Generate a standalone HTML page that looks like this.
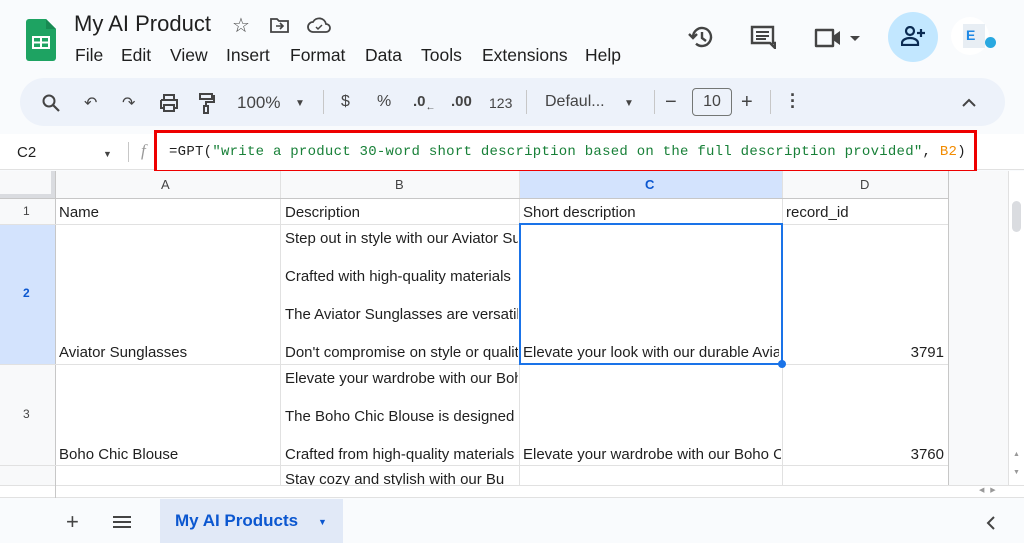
<!DOCTYPE html><html><head><style>
*{margin:0;padding:0;box-sizing:border-box}
body{width:1024px;height:543px;overflow:hidden;background:#f9fbfd;font-family:"Liberation Sans",Arial,sans-serif;position:relative;color:#1f1f1f}
.a{position:absolute}
.m{position:absolute;top:45px;font-size:17.5px}
.cell{position:absolute;font-size:15px;white-space:nowrap;overflow:hidden}
.vl{position:absolute;width:1px;background:#e1e1e1}
.hl{position:absolute;height:1px;background:#e1e1e1}
.tb{position:absolute;top:93px;font-size:16px;color:#444}
</style></head><body>
<svg class="a" style="left:26px;top:19px" width="30" height="42" viewBox="0 0 30 42"><path d="M3 0H20L30 10V39a3 3 0 0 1-3 3H3a3 3 0 0 1-3-3V3a3 3 0 0 1 3-3z" fill="#1ea362"/><path d="M20 0V10H30z" fill="#178a52"/><rect x="6" y="17" width="18" height="13" fill="#fff"/><rect x="8" y="19" width="6" height="3.5" fill="#1ea362"/><rect x="16" y="19" width="6" height="3.5" fill="#1ea362"/><rect x="8" y="24.5" width="6" height="3.5" fill="#1ea362"/><rect x="16" y="24.5" width="6" height="3.5" fill="#1ea362"/></svg>
<div class="a" style="left:74px;top:11px;font-size:22px">My AI Product</div>
<div class="a" style="left:232px;top:13px;font-size:20px;color:#444">☆</div>
<svg class="a" style="left:270px;top:17px" width="20" height="16"><path d="M1 2h6l2 2h9v11H1z" fill="none" stroke="#444" stroke-width="1.8"/><path d="M6 9h7M10 6l3 3-3 3" fill="none" stroke="#444" stroke-width="1.6"/></svg>
<svg class="a" style="left:307px;top:16px" width="24" height="18"><path d="M6 16a5 5 0 0 1 0-10 7 7 0 0 1 13 2 4 4 0 0 1 0 8z" fill="none" stroke="#444" stroke-width="1.8"/><path d="M9 11l2 2 4-4" fill="none" stroke="#444" stroke-width="1.5"/></svg>
<div class="m" style="left:75px">File</div><div class="m" style="left:121px">Edit</div><div class="m" style="left:170px">View</div><div class="m" style="left:226px">Insert</div><div class="m" style="left:290px">Format</div><div class="m" style="left:365px">Data</div><div class="m" style="left:421px">Tools</div><div class="m" style="left:482px">Extensions</div><div class="m" style="left:585px">Help</div>
<svg class="a" style="left:688px;top:24px" width="28" height="26"><path d="M5 13a9 9 0 1 1 3 6.7" fill="none" stroke="#444" stroke-width="2.4"/><path d="M1 10l4 4 4-4" fill="none" stroke="#444" stroke-width="2.4"/><path d="M14 8v6l4 3" fill="none" stroke="#444" stroke-width="2.4"/></svg>
<svg class="a" style="left:750px;top:25px" width="26" height="24"><path d="M2 2h21v16h2v5l-5-5H2z" fill="none" stroke="#444" stroke-width="2.4"/><path d="M6 7h13M6 11h13M6 14h10" stroke="#444" stroke-width="2"/></svg>
<svg class="a" style="left:814px;top:27px" width="50" height="22"><path d="M2 3h17v16H2z" fill="none" stroke="#444" stroke-width="2.4" stroke-linejoin="round"/><path d="M19 9l7-5v14l-7-5z" fill="#444"/><path d="M36 9h10l-5 5z" fill="#444"/></svg>
<div class="a" style="left:888px;top:12px;width:50px;height:50px;border-radius:50%;background:#c2e7ff"></div>
<svg class="a" style="left:901px;top:26px" width="26" height="20"><circle cx="9" cy="5" r="4" fill="none" stroke="#0b2b52" stroke-width="2.2"/><path d="M1 19v-2c0-3 4-5 8-5s8 2 8 5v2z" fill="none" stroke="#0b2b52" stroke-width="2.2"/><path d="M20 3v8M16 7h8" stroke="#0b2b52" stroke-width="2.2"/></svg>
<div class="a" style="left:951px;top:17px;width:38px;height:38px;border-radius:50%;background:#fff"></div>
<div class="a" style="left:963px;top:24px;width:22px;height:24px;background:#e8eef4"></div>
<div class="a" style="left:966px;top:27px;font-size:14px;color:#1e88e5;font-weight:bold">E</div>
<div class="a" style="left:985px;top:37px;width:11px;height:11px;border-radius:50%;background:#29a8e0"></div>
<div class="a" style="left:20px;top:78px;width:985px;height:48px;border-radius:24px;background:#edf2fa"></div>
<svg class="a" style="left:41px;top:93px" width="20" height="20"><circle cx="8" cy="8" r="5.5" fill="none" stroke="#444" stroke-width="2"/><path d="M12 12l6 6" stroke="#444" stroke-width="2.2"/></svg>
<div class="tb" style="left:84px">↶</div><div class="tb" style="left:122px">↷</div>
<svg class="a" style="left:159px;top:94px" width="20" height="18"><path d="M5 5V1h10v4M2 6h16v8h-3M5 14H2V6" fill="none" stroke="#444" stroke-width="2"/><rect x="5" y="11" width="10" height="6" fill="none" stroke="#444" stroke-width="2"/></svg>
<svg class="a" style="left:198px;top:92px" width="18" height="22"><path d="M2 2h12v5H2zM14 4h2v6H8v4" fill="none" stroke="#444" stroke-width="2"/><rect x="6" y="14" width="4" height="7" fill="none" stroke="#444" stroke-width="2"/></svg>
<div class="tb" style="left:237px;font-size:17px">100%</div><div class="tb" style="left:295px;font-size:10px;top:98px">▼</div>
<div class="a" style="left:323px;top:90px;width:1px;height:24px;background:#c7c7c7"></div>
<div class="tb" style="left:341px">$</div><div class="tb" style="left:377px">%</div>
<div class="tb" style="left:413px;font-weight:bold;font-size:15px">.0<sub style="font-size:10px">←</sub></div>
<div class="tb" style="left:451px;font-weight:bold;font-size:15px">.00</div>
<div class="tb" style="left:489px;font-size:14px;top:95px">123</div>
<div class="a" style="left:526px;top:90px;width:1px;height:24px;background:#c7c7c7"></div>
<div class="tb" style="left:545px">Defaul...</div><div class="tb" style="left:624px;font-size:10px;top:98px">▼</div>
<div class="a" style="left:654px;top:90px;width:1px;height:24px;background:#c7c7c7"></div>
<div class="tb" style="left:665px;font-size:20px;top:91px">−</div>
<div class="a" style="left:692px;top:88px;width:40px;height:28px;border:1px solid #747775;border-radius:4px;font-size:16px;text-align:center;line-height:26px;color:#444">10</div>
<div class="tb" style="left:741px;font-size:20px;top:91px">+</div>
<div class="a" style="left:770px;top:90px;width:1px;height:24px;background:#c7c7c7"></div>
<div class="tb" style="left:790px;font-weight:bold;font-size:18px;top:92px;line-height:6px">·<br>·<br>·</div>
<svg class="a" style="left:962px;top:98px" width="14" height="9"><path d="M1 8l6-6 6 6" fill="none" stroke="#444" stroke-width="2"/></svg>
<div class="a" style="left:0;top:134px;width:1024px;height:36px;background:#fff;border-bottom:1px solid #e1e1e1"></div>
<div class="a" style="left:17px;top:144px;font-size:15px">C2</div>
<div class="a" style="left:103px;top:149px;font-size:9px;color:#444">▼</div>
<div class="a" style="left:128px;top:142px;width:1px;height:20px;background:#c7c7c7"></div>
<div class="a" style="left:141px;top:141px;font-size:17px;font-style:italic;color:#999;font-family:'Liberation Serif',serif">f</div>
<div class="a" style="left:154px;top:130px;width:823px;height:43px;border:3px solid #ee0000;background:#fff"></div>
<div class="a" style="left:169px;top:144px;font-size:14px;font-family:'Liberation Mono',monospace;letter-spacing:0.26px;white-space:nowrap">=GPT(<span style="color:#188038">"write a product 30-word short description based on the full description provided"</span>, <span style="color:#f28b00">B2</span>)</div>
<div class="a" style="left:0;top:171px;width:1008px;height:314px;background:#fff"></div>
<div class="a" style="left:0;top:171px;width:1008px;height:27px;background:#f8f9fa"></div>
<div class="a" style="left:0;top:171px;width:55px;height:314px;background:#f8f9fa"></div>
<div class="a" style="left:0;top:171px;width:55px;height:27px;background:#f8f9fa;border-right:4px solid #dadce0;border-bottom:4px solid #dadce0"></div>
<div class="a" style="left:519px;top:171px;width:263px;height:27px;background:#d3e3fd"></div>
<div class="a" style="left:0;top:224px;width:55px;height:140px;background:#d3e3fd"></div>
<div class="a" style="left:948px;top:171px;width:60px;height:314px;background:#f8f9fa"></div>
<div class="vl" style="left:55px;top:171px;height:314px;background:#c7c7c7"></div>
<div class="vl" style="left:280px;top:171px;height:314px"></div>
<div class="vl" style="left:519px;top:171px;height:314px"></div>
<div class="vl" style="left:782px;top:171px;height:314px"></div>
<div class="vl" style="left:948px;top:171px;height:314px;background:#c7c7c7"></div>
<div class="hl" style="left:0;top:198px;width:948px;background:#c7c7c7"></div>
<div class="hl" style="left:0;top:224px;width:948px"></div>
<div class="hl" style="left:0;top:364px;width:948px"></div>
<div class="hl" style="left:0;top:465px;width:948px"></div>
<div class="cell" style="left:161px;top:177px;font-size:13px;color:#444">A</div>
<div class="cell" style="left:395px;top:177px;font-size:13px;color:#444">B</div>
<div class="cell" style="left:645px;top:177px;font-size:13px;color:#0b57d0;font-weight:bold">C</div>
<div class="cell" style="left:860px;top:177px;font-size:13px;color:#444">D</div>
<div class="cell" style="left:23px;top:204px;font-size:12px;color:#444">1</div>
<div class="cell" style="left:23px;top:286px;font-size:12px;color:#0b57d0;font-weight:bold">2</div>
<div class="cell" style="left:23px;top:407px;font-size:12px;color:#444">3</div>
<div class="cell" style="left:59px;top:204px">Name</div>
<div class="cell" style="left:285px;top:204px">Description</div>
<div class="cell" style="left:523px;top:204px">Short description</div>
<div class="cell" style="left:786px;top:204px">record_id</div>
<div class="cell" style="left:285px;top:230px;width:233px">Step out in style with our Aviator Sunglasses</div>
<div class="cell" style="left:285px;top:268px;width:233px">Crafted with high-quality materials</div>
<div class="cell" style="left:285px;top:306px;width:233px">The Aviator Sunglasses are versatile</div>
<div class="cell" style="left:285px;top:344px;width:233px">Don't compromise on style or quality</div>
<div class="cell" style="left:59px;top:344px">Aviator Sunglasses</div>
<div class="cell" style="left:523px;top:344px;width:256px">Elevate your look with our durable Aviator</div>
<div class="cell" style="left:786px;top:344px;width:158px;text-align:right">3791</div>
<div class="cell" style="left:285px;top:370px;width:233px">Elevate your wardrobe with our Boho</div>
<div class="cell" style="left:285px;top:408px;width:233px">The Boho Chic Blouse is designed</div>
<div class="cell" style="left:285px;top:446px;width:233px">Crafted from high-quality materials</div>
<div class="cell" style="left:59px;top:446px">Boho Chic Blouse</div>
<div class="cell" style="left:523px;top:446px;width:258px">Elevate your wardrobe with our Boho Chic</div>
<div class="cell" style="left:786px;top:446px;width:158px;text-align:right">3760</div>
<div class="cell" style="left:285px;top:471px;width:233px;height:14px">Stay cozy and stylish with our Bu</div>
<div class="a" style="left:519px;top:223px;width:264px;height:142px;border:2px solid #1a73e8"></div>
<div class="a" style="left:778px;top:360px;width:8px;height:8px;border-radius:50%;background:#1a73e8"></div>
<div class="a" style="left:1008px;top:171px;width:16px;height:314px;background:#fff;border-left:1px solid #e1e1e1"></div>
<div class="a" style="left:1012px;top:201px;width:9px;height:31px;border-radius:5px;background:#dadce0"></div>
<div class="a" style="left:1013px;top:451px;font-size:7px;color:#999">▲</div>
<div class="a" style="left:1013px;top:469px;font-size:7px;color:#999">▼</div>
<div class="a" style="left:0;top:485px;width:1024px;height:13px;background:#fff;border-top:1px solid #e1e1e1;border-bottom:1px solid #e1e1e1"></div>
<div class="a" style="left:55px;top:485px;width:1px;height:13px;background:#c7c7c7"></div>
<div class="a" style="left:979px;top:486px;font-size:7px;color:#999">◀&nbsp;&nbsp;&nbsp;▶</div>
<div class="a" style="left:66px;top:509px;font-size:22px;color:#444">+</div>
<svg class="a" style="left:113px;top:516px" width="18" height="12"><path d="M0 1h18M0 6h18M0 11h18" stroke="#444" stroke-width="2"/></svg>
<div class="a" style="left:160px;top:499px;width:183px;height:44px;background:#e1e9f7"></div>
<div class="a" style="left:175px;top:511px;font-size:17px;font-weight:bold;color:#0b57d0">My AI Products</div>
<div class="a" style="left:318px;top:517px;font-size:9px;color:#0b57d0">▼</div>
<svg class="a" style="left:986px;top:516px" width="9" height="14"><path d="M8 1L2 7l6 6" fill="none" stroke="#444" stroke-width="2"/></svg>
</body></html>
